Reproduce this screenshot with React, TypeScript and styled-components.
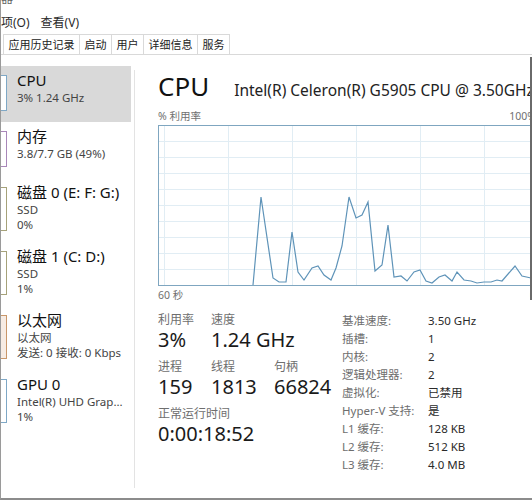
import { Fragment } from "react";
import { createGlobalStyle, styled } from "styled-components";

const GlobalStyle = createGlobalStyle`
  html, body {
    margin: 0;
    padding: 0;
    background: #fff;
  }
  body {
    font-family: "Noto Sans", "Noto Sans CJK SC", sans-serif;
    color: #1a1a1a;
  }
`;

const Window = styled.div`
  position: relative;
  width: 532px;
  height: 500px;
  box-sizing: border-box;
  border-left: 1px solid #9a9a9a;
  border-bottom: 2px solid #8c8c8c;
  display: flex;
  flex-direction: column;
  overflow: hidden;
  background: #fff;
`;

const TitleStrip = styled.div`
  height: 6px;
  overflow: hidden;
  font-size: 12px;
  line-height: 12px;
  color: #666;
`;

const TitleText = styled.div`
  margin-top: -7px;
`;

const MenuBar = styled.div`
  height: 28px;
  box-sizing: border-box;
  padding-top: 4px;
  display: flex;
  align-items: center;
  gap: 11px;
  font-size: 12px;
  color: #2a2a2a;
`;

const TabBar = styled.div`
  height: 21px;
  box-sizing: border-box;
  display: flex;
  align-items: flex-end;
  padding-left: 2px;
  border-bottom: 1px solid #d9d9d9;
`;

const Tab = styled.div`
  height: 20px;
  box-sizing: border-box;
  padding: 0 4.5px;
  margin-right: -1px;
  border: 1px solid #d9d9d9;
  border-bottom: none;
  font-size: 11px;
  line-height: 19px;
  color: #222;
  background: #fff;
`;

const Body = styled.div`
  flex: 1;
  display: flex;
  min-height: 0;
`;

const Sidebar = styled.div`
  width: 130px;
  padding-top: 11px;
  display: flex;
  flex-direction: column;
`;

const SideItem = styled.div<{ $selected?: boolean }>`
  display: flex;
  min-height: 56px;
  background: ${(p) => (p.$selected ? "#d9d9d9" : "transparent")};
`;

const Thumb = styled.div<{ $color: string; $fill?: string }>`
  width: 5px;
  margin: 9px 0 11px;
  border: 1px solid ${(p) => p.$color};
  border-left: none;
  background: ${(p) => p.$fill || "#fff"};
`;

const SideText = styled.div`
  display: flex;
  flex-direction: column;
  padding: 4px 0 10px 10px;
  white-space: nowrap;
`;

const SideTitle = styled.div`
  font-size: 15px;
  line-height: 20px;
  color: #111;
`;

const SideSub = styled.div`
  font-size: 11.5px;
  line-height: 15px;
  color: #444;
`;

const Divider = styled.div`
  width: 1px;
  margin: 15px 2px 10px 3px;
  background: #e3e3e3;
`;

const Main = styled.div`
  flex: 1;
  min-width: 0;
  overflow: hidden;
  padding: 14px 0 0 21px;
  white-space: nowrap;
`;

const Heading = styled.div`
  display: flex;
  align-items: baseline;
  gap: 25px;
`;

const HeadTitle = styled.div`
  font-size: 26px;
  line-height: 34px;
  color: #111;
`;

const HeadModel = styled.div`
  font-size: 15.5px;
  color: #222;
`;

const GraphLabels = styled.div<{ $top: number }>`
  width: 378px;
  margin-top: ${(p) => p.$top}px;
  display: flex;
  justify-content: space-between;
  font-size: 10.5px;
  line-height: 14px;
  color: #707070;
`;

const Graph = styled.svg`
  display: block;
  margin-top: 2px;
`;

const Stats = styled.div`
  display: flex;
  align-items: flex-start;
  margin-top: 10px;
`;

const LeftStats = styled.div`
  width: 184px;
  display: grid;
  grid-template-columns: 53px 63px auto;
  align-content: start;
`;

const StatLabel = styled.div<{ $span?: number; $gap?: number }>`
  grid-column: span ${(p) => p.$span || 1};
  margin-top: ${(p) => p.$gap || 0}px;
  font-size: 12px;
  line-height: 16px;
  color: #6e6e6e;
`;

const StatValue = styled.div<{ $span?: number }>`
  grid-column: span ${(p) => p.$span || 1};
  font-size: 20px;
  line-height: 24px;
  margin-bottom: -1px;
  color: #1a1a1a;
`;

const RightStats = styled.div`
  display: grid;
  grid-template-columns: 86px auto;
  align-content: start;
  font-size: 11.5px;
  line-height: 18px;
`;

const InfoKey = styled.div`
  color: #6e6e6e;
`;

const InfoVal = styled.div`
  color: #2a2a2a;
`;

const EdgeLine = styled.div`
  position: absolute;
  left: 529px;
  top: 57px;
  width: 2px;
  height: 243px;
  background: #6a6a6a;
`;

const sideItems = [
  { title: "CPU", lines: ["3% 1.24 GHz"], color: "#7fa8c6", selected: true },
  { title: "内存", lines: ["3.8/7.7 GB (49%)"], color: "#a987b9" },
  { title: "磁盘 0 (E: F: G:)", lines: ["SSD", "0%"], color: "#a6a27a" },
  { title: "磁盘 1 (C: D:)", lines: ["SSD", "1%"], color: "#a6a27a" },
  { title: "以太网", lines: ["以太网", "发送: 0 接收: 0 Kbps"], color: "#c9976a", fill: "#f7ece4" },
  { title: "GPU 0", lines: ["Intel(R) UHD Grap...", "1%"], color: "#7fa8c6" },
];

const info: [string, string][] = [
  ["基准速度:", "3.50 GHz"],
  ["插槽:", "1"],
  ["内核:", "2"],
  ["逻辑处理器:", "2"],
  ["虚拟化:", "已禁用"],
  ["Hyper-V 支持:", "是"],
  ["L1 缓存:", "128 KB"],
  ["L2 缓存:", "512 KB"],
  ["L3 缓存:", "4.0 MB"],
];

const usage = [
  [95, 160], [103, 72], [115, 153], [121, 157], [128, 157], [134, 107],
  [140, 147], [146, 155], [154, 143], [160, 141], [166, 150], [173, 155],
  [178, 143], [184, 121], [191, 72], [198, 93], [204, 90], [210, 77],
  [217, 146], [224, 140], [230, 100], [236, 152], [243, 151], [249, 156],
  [256, 147], [262, 145], [268, 156], [274, 158], [281, 152], [287, 150],
  [294, 156], [299, 147], [306, 155], [313, 156], [319, 158], [326, 157],
  [333, 157], [339, 155], [344, 156], [357, 141], [364, 151], [373, 153],
  [381, 154],
];

function UsageGraph() {
  const w = 380;
  const h = 161;
  const line = usage.map(([x, y]) => `${x},${y}`).join(" ");
  return (
    <Graph width={w} height={h} viewBox={`0 0 ${w} ${h}`}>
      {[6, 70, 134, 198, 262, 326].map((x) => (
        <line key={x} x1={x + 0.5} y1={0} x2={x + 0.5} y2={h} stroke="#e1edf4" />
      ))}
      {[16, 32, 48, 64, 80, 96, 112, 128, 144].map((y) => (
        <line key={y} x1={0} y1={y + 0.5} x2={w} y2={y + 0.5} stroke="#e1edf4" />
      ))}
      <polyline points={line} fill="none" stroke="#5e93b8" strokeWidth={1.2} />
      <rect x={0.5} y={0.5} width={w - 1} height={h - 1} fill="none" stroke="#7fa6c0" />
    </Graph>
  );
}

export default function App() {
  return (
    <>
      <GlobalStyle />
      <Window>
        <TitleStrip>
          <TitleText>器</TitleText>
        </TitleStrip>
        <MenuBar>
          <span>项(O)</span>
          <span>查看(V)</span>
        </MenuBar>
        <TabBar>
          {["应用历史记录", "启动", "用户", "详细信息", "服务"].map((t) => (
            <Tab key={t}>{t}</Tab>
          ))}
        </TabBar>
        <Body>
          <Sidebar>
            {sideItems.map((item) => (
              <SideItem key={item.title} $selected={item.selected}>
                <Thumb $color={item.color} $fill={item.fill} />
                <SideText>
                  <SideTitle>{item.title}</SideTitle>
                  {item.lines.map((l) => (
                    <SideSub key={l}>{l}</SideSub>
                  ))}
                </SideText>
              </SideItem>
            ))}
          </Sidebar>
          <Divider />
          <Main>
            <Heading>
              <HeadTitle>CPU</HeadTitle>
              <HeadModel>Intel(R) Celeron(R) G5905 CPU @ 3.50GHz</HeadModel>
            </Heading>
            <GraphLabels $top={6}>
              <span>% 利用率</span>
              <span>100%</span>
            </GraphLabels>
            <UsageGraph />
            <GraphLabels $top={2}>
              <span>60 秒</span>
              <span>0</span>
            </GraphLabels>
            <Stats>
              <LeftStats>
                <StatLabel>利用率</StatLabel>
                <StatLabel $span={2}>速度</StatLabel>
                <StatValue>3%</StatValue>
                <StatValue $span={2}>1.24 GHz</StatValue>
                <StatLabel $gap={8}>进程</StatLabel>
                <StatLabel $gap={8}>线程</StatLabel>
                <StatLabel $gap={8}>句柄</StatLabel>
                <StatValue>159</StatValue>
                <StatValue>1813</StatValue>
                <StatValue>66824</StatValue>
                <StatLabel $span={3} $gap={8}>正常运行时间</StatLabel>
                <StatValue $span={3}>0:00:18:52</StatValue>
              </LeftStats>
              <RightStats>
                {info.map(([k, v]) => (
                  <Fragment key={k}>
                    <InfoKey>{k}</InfoKey>
                    <InfoVal>{v}</InfoVal>
                  </Fragment>
                ))}
              </RightStats>
            </Stats>
          </Main>
        </Body>
        <EdgeLine />
      </Window>
    </>
  );
}
